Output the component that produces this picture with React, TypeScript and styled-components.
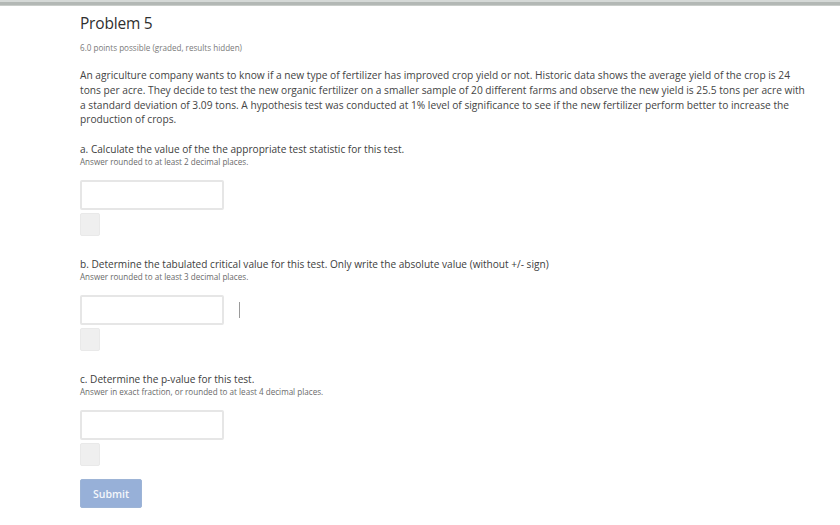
import React from 'react'
import styled, { createGlobalStyle } from 'styled-components'

const GlobalStyle = createGlobalStyle`
  html, body {
    margin: 0;
    padding: 0;
    background: #fff;
    font-family: "Open Sans", "Noto Sans", sans-serif;
    color: #3b3b3b;
  }
`

const TopBar = styled.div`
  height: 3px;
  background: #b3b8b5;
  border-top: 2px solid #d5d9d7;
  border-bottom: 1px solid #c9cdca;
`

const Page = styled.main`
  padding: 6px 30px 0 80px;
`

const Title = styled.h2`
  margin: 0;
  font-size: 15.5px;
  font-weight: 400;
  letter-spacing: -0.2px;
  color: #2f2f2f;
  line-height: 22px;
`

const Points = styled.div`
  margin-top: 8px;
  font-size: 8.1px;
  color: #7a7a7a;
  line-height: 12px;
`

const Body = styled.p`
  margin: 14px 0 0;
  font-size: 10.2px;
  line-height: 14.8px;
  color: #444;
  max-width: 725px;
`

const Part = styled.section`
  margin-top: 16px;
  & + & {
    margin-top: 22px;
  }
`

const Label = styled.div`
  font-size: 10.1px;
  line-height: 13px;
  color: #404040;
`

const Hint = styled.div`
  font-size: 8.1px;
  line-height: 12px;
  color: #6a6a6a;
`

const InputRow = styled.div`
  display: flex;
  align-items: center;
  gap: 15px;
  margin-top: 12px;
`

const Field = styled.div`
  width: 140px;
  height: 26px;
  border: 2px solid #e6e6e6;
  border-radius: 2px;
  background: #fff;
`

const Caret = styled.div`
  width: 1px;
  height: 16px;
  background: #9a9a9a;
`

const Status = styled.div`
  width: 20px;
  height: 23px;
  margin-top: 3px;
  border-radius: 2px;
  background: #efefef;
  border: 1px solid #e9e9e9;
  box-sizing: border-box;
`

const SubmitButton = styled.button`
  margin-top: 13px;
  width: 62px;
  height: 29px;
  border: 1px solid #9db4d6;
  border-radius: 2px;
  background: #97b0d8;
  color: #f4f7fb;
  font-family: inherit;
  font-size: 10.5px;
  font-weight: 600;
  padding: 0;
`

type PartProps = { label: string; hint: string; caret?: boolean }

const Question = ({ label, hint, caret }: PartProps) => (
  <Part>
    <Label>{label}</Label>
    <Hint>{hint}</Hint>
    <InputRow>
      <Field />
      {caret && <Caret />}
    </InputRow>
    <Status />
  </Part>
)

export default function App() {
  return (
    <>
      <GlobalStyle />
      <TopBar />
      <Page>
        <Title>Problem 5</Title>
        <Points>6.0 points possible (graded, results hidden)</Points>
        <Body>
          An agriculture company wants to know if a new type of fertilizer has improved crop yield or not. Historic data
          shows the average yield of the crop is 24 tons per acre. They decide to test the new organic fertilizer on a
          smaller sample of 20 different farms and observe the new yield is 25.5 tons per acre with a standard deviation
          of 3.09 tons. A hypothesis test was conducted at 1% level of significance to see if the new fertilizer perform
          better to increase the production of crops.
        </Body>
        <Question
          label="a. Calculate the value of the the appropriate test statistic for this test."
          hint="Answer rounded to at least 2 decimal places."
        />
        <Question
          label="b. Determine the tabulated critical value for this test. Only write the absolute value (without +/- sign)"
          hint="Answer rounded to at least 3 decimal places."
          caret
        />
        <Question
          label="c. Determine the p-value for this test."
          hint="Answer in exact fraction, or rounded to at least 4 decimal places."
        />
        <SubmitButton>Submit</SubmitButton>
      </Page>
    </>
  )
}
